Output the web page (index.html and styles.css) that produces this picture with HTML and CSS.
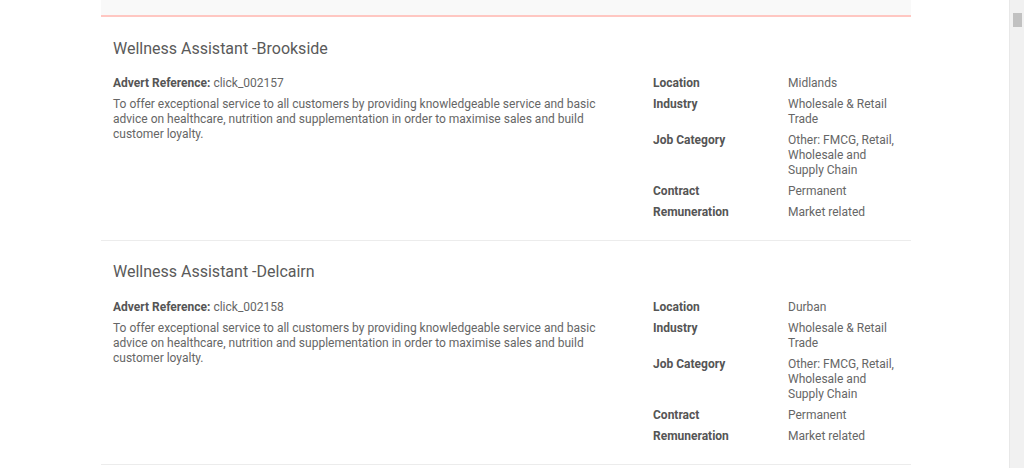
FILE: index.html
```html
<!DOCTYPE html>
<html lang="en">
<head>
<meta charset="utf-8">
<title>Jobs</title>
<link rel="stylesheet" href="styles.css">
</head>
<body>
<div class="viewport">
  <div class="page">
    <div class="container">
      <div class="topbar"></div>

      <article class="job">
        <h2 class="job-title">Wellness Assistant -Brookside</h2>
        <div class="job-body">
          <div class="job-main">
            <p class="ref"><strong>Advert Reference:</strong> click_002157</p>
            <p class="desc">To offer exceptional service to all customers by providing knowledgeable service and basic advice on healthcare, nutrition and supplementation in order to maximise sales and build customer loyalty.</p>
          </div>
          <dl class="job-meta">
            <dt>Location</dt><dd>Midlands</dd>
            <dt>Industry</dt><dd>Wholesale &amp; Retail Trade</dd>
            <dt>Job Category</dt><dd>Other: FMCG, Retail, Wholesale and Supply Chain</dd>
            <dt>Contract</dt><dd>Permanent</dd>
            <dt>Remuneration</dt><dd>Market related</dd>
          </dl>
        </div>
      </article>

      <article class="job">
        <h2 class="job-title">Wellness Assistant -Delcairn</h2>
        <div class="job-body">
          <div class="job-main">
            <p class="ref"><strong>Advert Reference:</strong> click_002158</p>
            <p class="desc">To offer exceptional service to all customers by providing knowledgeable service and basic advice on healthcare, nutrition and supplementation in order to maximise sales and build customer loyalty.</p>
          </div>
          <dl class="job-meta">
            <dt>Location</dt><dd>Durban</dd>
            <dt>Industry</dt><dd>Wholesale &amp; Retail Trade</dd>
            <dt>Job Category</dt><dd>Other: FMCG, Retail, Wholesale and Supply Chain</dd>
            <dt>Contract</dt><dd>Permanent</dd>
            <dt>Remuneration</dt><dd>Market related</dd>
          </dl>
        </div>
      </article>
    </div>
  </div>
  <div class="scrollbar"><div class="thumb"></div></div>
</div>
</body>
</html>
```

FILE: styles.css
```css
html, body {
  margin: 0;
  padding: 0;
  height: 100%;
  overflow: hidden;
  background: #ffffff;
}

body {
  font-family: Roboto, "Liberation Sans", Arial, sans-serif;
  font-size: 12px;
  line-height: 15px;
  color: #666666;
}

.viewport {
  display: flex;
  height: 468px;
}

.page {
  flex: 1;
  overflow: hidden;
}

.container {
  width: 810px;
  margin: 0 0 0 101px;
}

.topbar {
  height: 15px;
  background: #f9f9f9;
  border-bottom: 2px solid #ffc7c2;
}

.job {
  padding: 22px 12px 20px;
  border-bottom: 1px solid #ececec;
}

.job + .job {
  padding-top: 21px;
}

.job-title {
  margin: 0 0 18px;
  font-size: 16px;
  line-height: 19px;
  font-weight: 400;
  color: #5a5a5a;
}

.job + .job .job-title {
  margin-bottom: 19px;
}

.job-body {
  display: flex;
  gap: 46px;
}

.job-main {
  width: 494px;
}

.ref {
  margin: 0 0 6px;
}

.ref strong {
  font-weight: 700;
  color: #555555;
}

.desc {
  margin: 0;
}

.job-meta {
  flex: 1;
  margin: 0;
  display: grid;
  grid-template-columns: 135px 1fr;
  row-gap: 6px;
}

.job-meta dt {
  font-weight: 700;
  color: #555555;
}

.job-meta dd {
  margin: 0;
}

.scrollbar {
  width: 15px;
  background: #f1f1f1;
  border-left: 1px solid #e8e8e8;
  box-sizing: border-box;
  padding: 13px 2px 0 3px;
}

.thumb {
  height: 14px;
  background: #c1c1c1;
}
```
